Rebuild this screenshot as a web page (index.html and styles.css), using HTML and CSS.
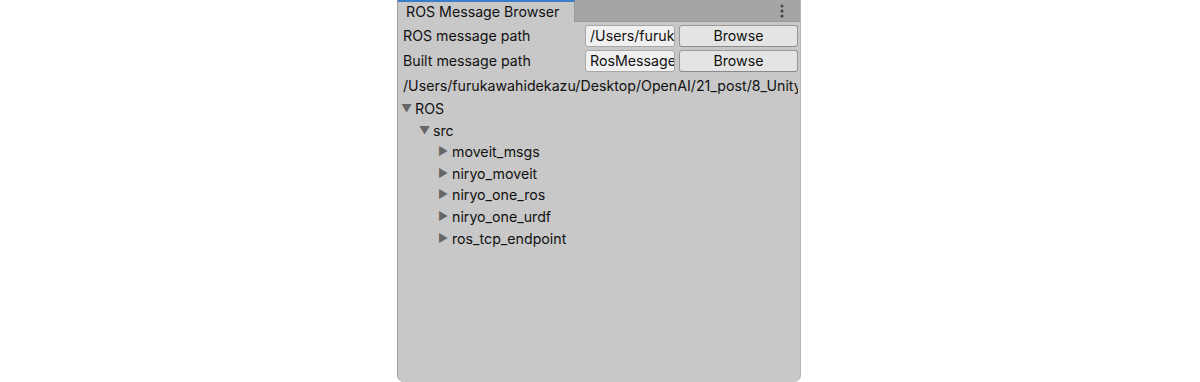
FILE: index.html
```html
<html>
<head>
  <title>ROS Message Browser</title>
  <link rel="stylesheet" href="styles.css">
</head>
<body>
    <div class="window">
        <div class="tabbar">
            <div class="tab">ROS Message Browser</div>
            <div class="tab_rest">
                <svg class="menu" width="4" height="14" viewBox="0 0 4 14">
                    <circle cx="2" cy="2" r="1.5" fill="#444"/>
                    <circle cx="2" cy="7" r="1.5" fill="#444"/>
                    <circle cx="2" cy="12" r="1.5" fill="#444"/>
                </svg>
            </div>
        </div>
        <div class="content">
            <div class="field_row">
                <div class="field_label">ROS message path</div>
                <div class="field_input">/Users/furuk</div>
                <div class="button">Browse</div>
            </div>
            <div class="field_row">
                <div class="field_label">Built message path</div>
                <div class="field_input">RosMessages</div>
                <div class="button">Browse</div>
            </div>
            <div class="path">/Users/furukawahidekazu/Desktop/OpenAI/21_post/8_Unity</div>
            <div class="tree">
                <div class="node"><span class="arrow">&#9660;</span>ROS</div>
                <div class="node level1"><span class="arrow">&#9660;</span>src</div>
                <div class="node level2"><span class="arrow">&#9654;</span>moveit_msgs</div>
                <div class="node level2"><span class="arrow">&#9654;</span>niryo_moveit</div>
                <div class="node level2"><span class="arrow">&#9654;</span>niryo_one_ros</div>
                <div class="node level2"><span class="arrow">&#9654;</span>niryo_one_urdf</div>
                <div class="node level2"><span class="arrow">&#9654;</span>ros_tcp_endpoint</div>
            </div>
        </div>
    </div>
</body>
</html>
```

FILE: styles.css
```css
body {
    padding:0px;
    margin:0px;
    font-family: Inter, "Noto Sans", sans-serif;
    background-color:#fff;
    display: flex;
    justify-content: center;
}

.window {
    width: 402px;
    height: 382px;
    margin-right: 2px;
    background-color:#c8c8c8;
    border-left:1px solid #a0a0a0;
    border-right:1px solid #b4b4b4;
    border-radius: 0 0 7px 7px;
    overflow: hidden;
    display: flex;
    flex-direction: column;
    font-size: 14.2px;
    color:#111;
}

.tabbar {
    display: flex;
    height: 22px;
    background-color:#a5a5a5;
}

.tab {
    width: 177px;
    box-sizing: border-box;
    border-top:2px solid #3a7dc9;
    background-color:#c8c8c8;
    padding-left: 8px;
    line-height: 20px;
    border-right:1px solid #999;
}

.tab_rest {
    flex: 1;
    display: flex;
    justify-content: flex-end;
    align-items: center;
    padding-right: 16px;
    border-bottom:1px solid #999;
}

.content {
    padding: 1px 2px 0 5px;
}

.field_row {
    display: flex;
    align-items: center;
    height: 25px;
}

.field_label {
    width: 182px;
}

.field_input {
    width: 80px;
    height: 20px;
    line-height: 20px;
    padding: 0 4px;
    background-color:#f0f0f0;
    border:1px solid #a8a8a8;
    border-radius: 3px;
    overflow: hidden;
    white-space: nowrap;
    margin-right: 4px;
}

.button {
    width: 117px;
    height: 20px;
    line-height: 20px;
    text-align: center;
    background-color:#e4e4e4;
    border:1px solid #999;
    border-bottom-color:#8a8a8a;
    border-radius: 3px;
}

.path {
    height: 25px;
    line-height: 25px;
    white-space: nowrap;
    overflow: hidden;
}

.tree {
    margin-left: -2px;
}

.node {
    height: 21.6px;
    line-height: 21.6px;
    white-space: nowrap;
}

.level1 {
    padding-left: 18px;
}

.level2 {
    padding-left: 37px;
}

.arrow {
    display: inline-block;
    width: 14px;
    font-size: 11px;
    color:#666;
    vertical-align: top;
}
```
